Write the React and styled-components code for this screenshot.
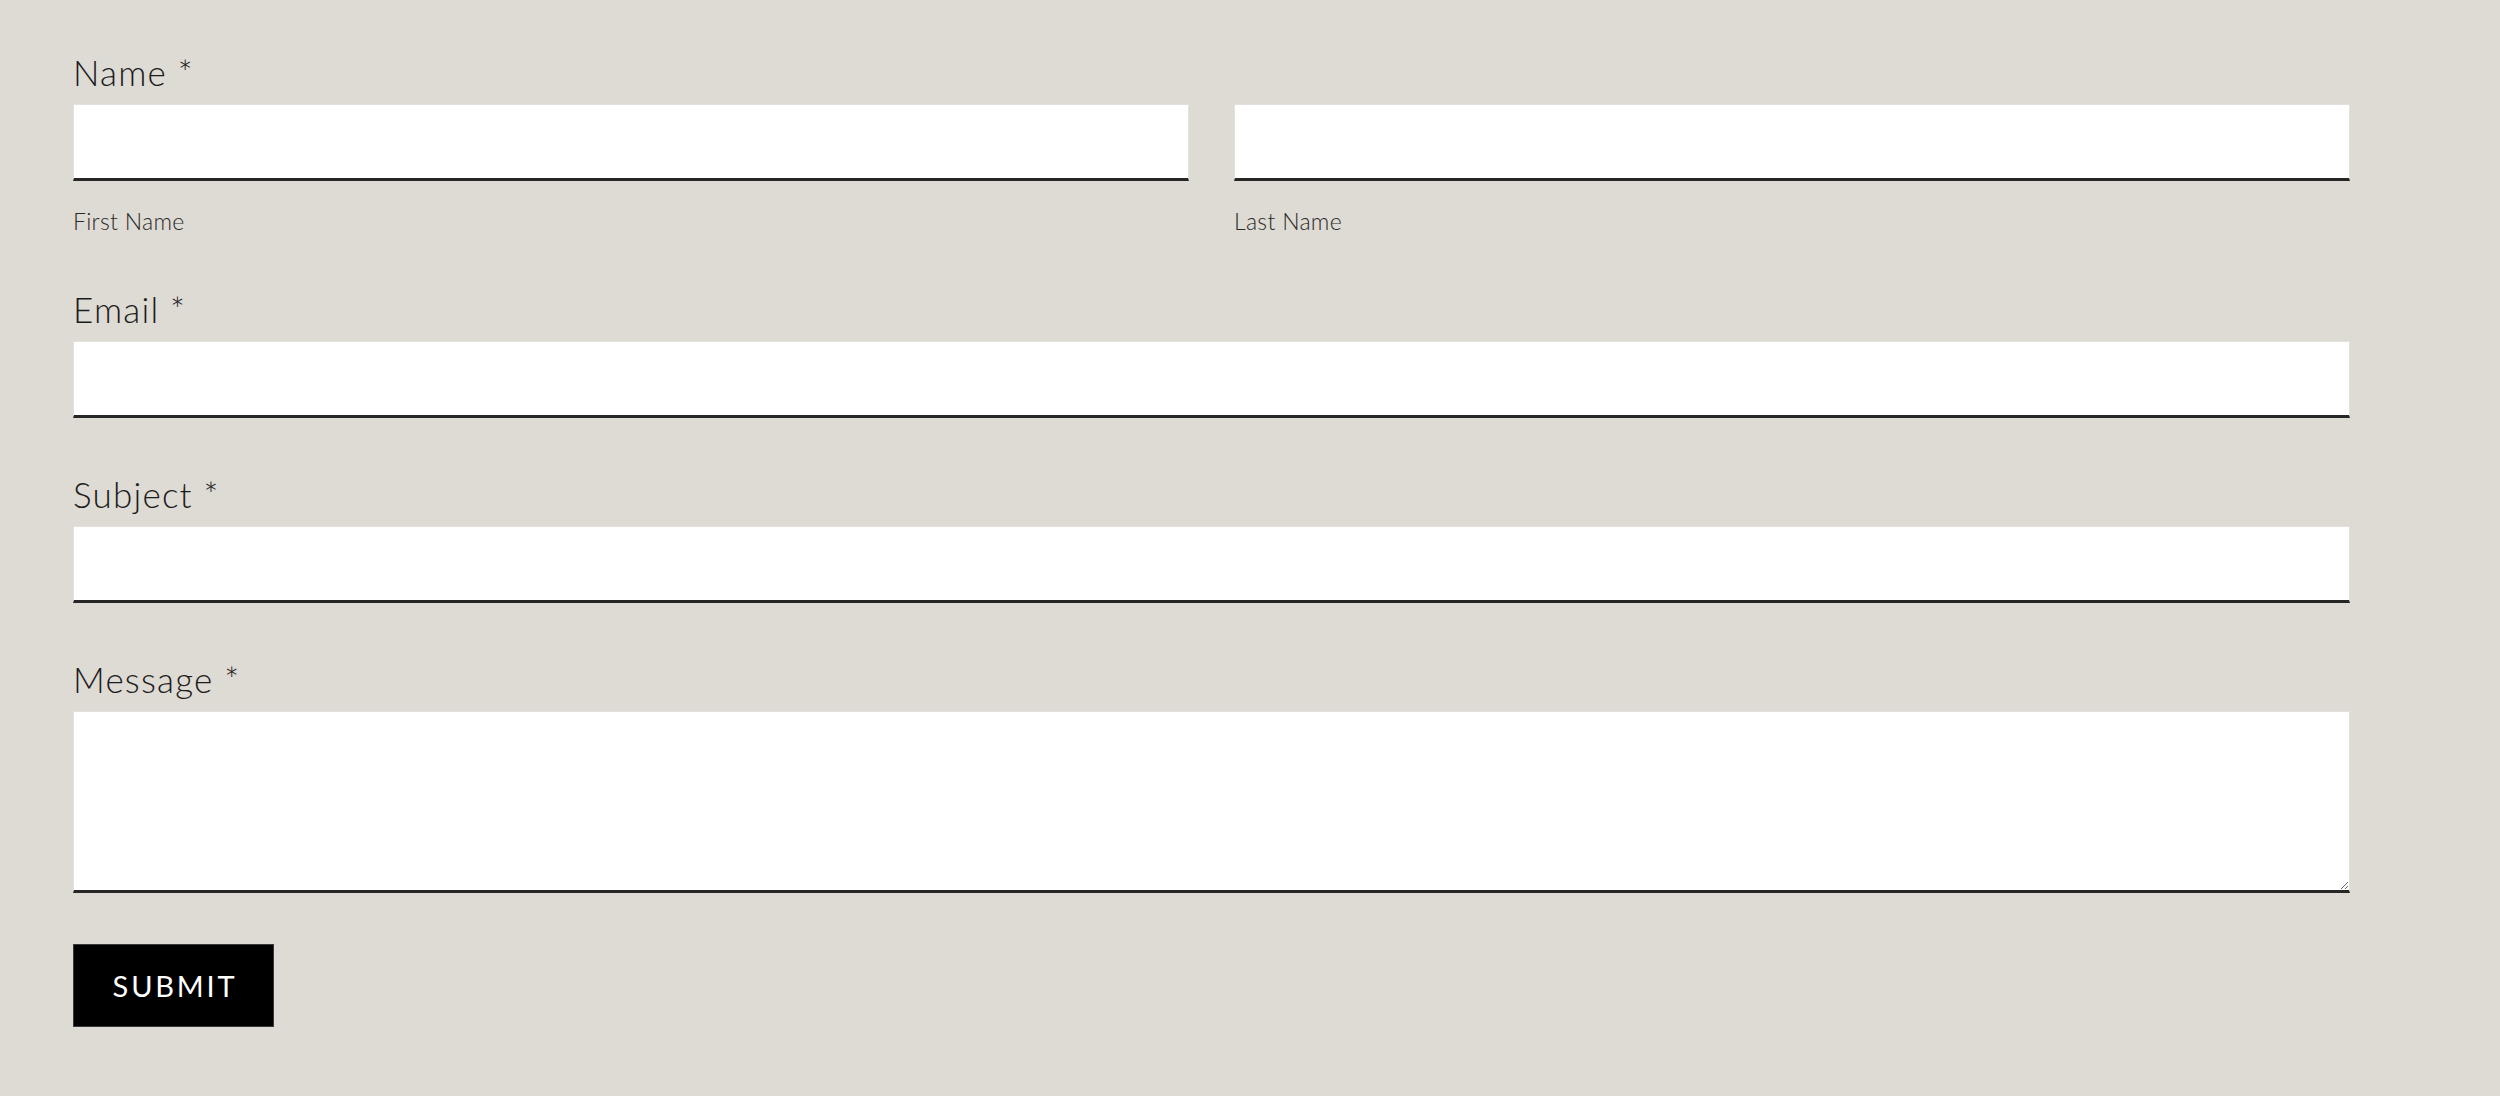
import React from "react";
import styled, { createGlobalStyle } from "styled-components";

const GlobalStyle = createGlobalStyle`
  html, body {
    margin: 0;
    padding: 0;
    background: #dedad4;
  }
  * { box-sizing: border-box; }
`;

const Page = styled.div`
  padding: 51px 0 60px 73px;
  font-family: "Lato", "Liberation Sans", sans-serif;
  color: #1c1c1c;
`;

const Form = styled.form`
  width: 2277px;
  display: flex;
  flex-direction: column;
`;

const Field = styled.div`
  display: flex;
  flex-direction: column;
  margin-bottom: ${(p) => p.$gap ?? 55}px;
`;

const Label = styled.label`
  font-size: 35px;
  line-height: 42px;
  font-weight: 300;
  letter-spacing: 1.2px;
  color: #1c1c1c;
  margin-bottom: 11px;
`;

const NameRow = styled.div`
  display: grid;
  grid-template-columns: 1fr 1fr;
  column-gap: 45px;
`;

const Column = styled.div`
  display: flex;
  flex-direction: column;
`;

const Input = styled.input`
  display: block;
  width: 100%;
  height: 77px;
  background: #fff;
  border: 1px solid #e4e1dc;
  border-bottom: 3px solid #262626;
  border-radius: 0;
  outline: none;
  font-family: inherit;
  font-size: 24px;
  padding: 0 16px;
`;

const TextArea = styled.textarea`
  display: block;
  width: 100%;
  height: 182px;
  background: #fff;
  border: 1px solid #e4e1dc;
  border-bottom: 3px solid #262626;
  border-radius: 0;
  outline: none;
  font-family: inherit;
  font-size: 24px;
  padding: 12px 16px;
  margin: 0;
`;

const SubLabel = styled.span`
  margin-top: 26px;
  font-size: 23px;
  line-height: 28px;
  font-weight: 300;
  letter-spacing: 0.3px;
  color: #2a2a2a;
`;

const SubmitButton = styled.button`
  align-self: flex-start;
  width: 201px;
  height: 83px;
  margin-top: 51px;
  padding: 0 0 0 3px;
  background: #000;
  color: #fff;
  border: 1px solid #3a3a3a;
  border-radius: 0;
  font-family: "Lato", "Liberation Sans", sans-serif;
  font-size: 29px;
  font-weight: 400;
  letter-spacing: 2.8px;
  text-transform: uppercase;
  cursor: pointer;
`;

export default function App() {
  return (
    <>
      <GlobalStyle />
      <Page>
        <Form onSubmit={(e) => e.preventDefault()}>
          <Field $gap={53}>
            <Label>Name *</Label>
            <NameRow>
              <Column>
                <Input type="text" aria-label="First Name" />
                <SubLabel>First Name</SubLabel>
              </Column>
              <Column>
                <Input type="text" aria-label="Last Name" />
                <SubLabel>Last Name</SubLabel>
              </Column>
            </NameRow>
          </Field>
          <Field>
            <Label>Email *</Label>
            <Input type="email" />
          </Field>
          <Field>
            <Label>Subject *</Label>
            <Input type="text" />
          </Field>
          <Field $gap={0}>
            <Label>Message *</Label>
            <TextArea />
          </Field>
          <SubmitButton type="submit">Submit</SubmitButton>
        </Form>
      </Page>
    </>
  );
}
